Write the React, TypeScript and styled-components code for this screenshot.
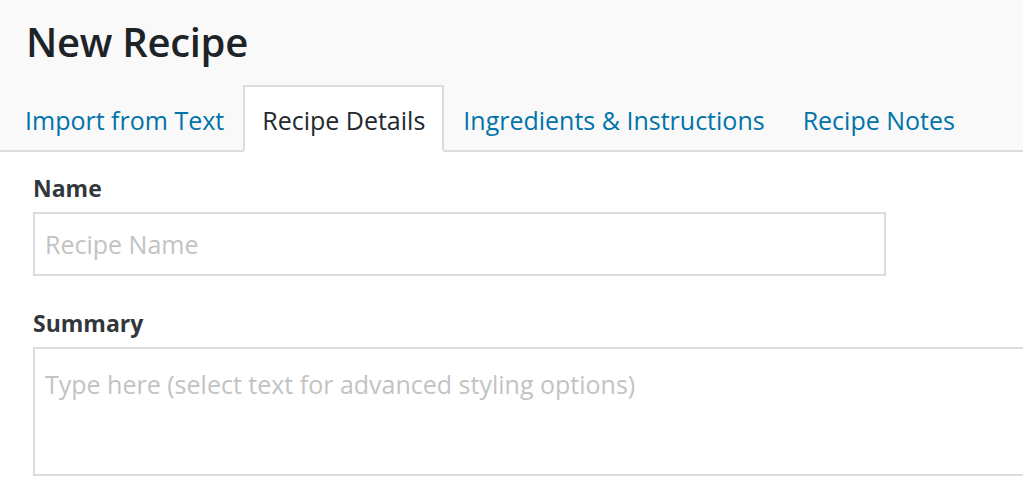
import React from 'react';
import styled, { createGlobalStyle } from 'styled-components';

const GlobalStyle = createGlobalStyle`
  body {
    margin: 0;
    background: #ffffff;
    font-family: 'Open Sans', 'Noto Sans', Arial, sans-serif;
    overflow: hidden;
  }
`;

const Header = styled.div`
  background: #f9f9f9;
  border-bottom: 2px solid #dcdcdc;
`;

const Title = styled.h1`
  margin: 0;
  padding: 17px 0 0 26px;
  font-size: 40px;
  font-weight: 600;
  line-height: 50px;
  color: #1d2327;
  letter-spacing: -0.3px;
`;

const TabList = styled.div`
  display: flex;
  margin: 18px 0 -2px 6px;
`;

const Tab = styled.div<{ $active?: boolean }>`
  box-sizing: border-box;
  height: 67px;
  padding: 2px 17px 0;
  display: flex;
  align-items: center;
  font-size: 25px;
  color: ${(p) => (p.$active ? '#23282d' : '#0073aa')};
  background: ${(p) => (p.$active ? '#ffffff' : 'transparent')};
  border: 2px solid ${(p) => (p.$active ? '#dcdcdc' : 'transparent')};
  border-bottom: 2px solid ${(p) => (p.$active ? '#ffffff' : 'transparent')};
`;

const Content = styled.div`
  padding: 22px 0 0 33px;
`;

const Field = styled.div`
  margin-bottom: 33px;
`;

const Label = styled.label`
  display: block;
  font-size: 23px;
  font-weight: 700;
  color: #32373c;
  line-height: 28px;
  margin-bottom: 10px;
`;

const Input = styled.input`
  box-sizing: border-box;
  width: 853px;
  height: 64px;
  border: 2px solid #dcdcdc;
  padding: 0 10px;
  font-family: inherit;
  font-size: 25px;
  color: #32373c;
  outline: none;
  &::placeholder {
    color: #c3c3c3;
  }
`;

const Editor = styled.div`
  box-sizing: border-box;
  width: 1010px;
  height: 129px;
  border: 2px solid #dcdcdc;
  padding: 18px 10px;
  font-size: 25px;
  color: #c3c3c3;
`;

export default function App() {
  return (
    <>
      <GlobalStyle />
      <Header>
        <Title>New Recipe</Title>
        <TabList>
          <Tab>Import from Text</Tab>
          <Tab $active>Recipe Details</Tab>
          <Tab>Ingredients &amp; Instructions</Tab>
          <Tab>Recipe Notes</Tab>
        </TabList>
      </Header>
      <Content>
        <Field>
          <Label>Name</Label>
          <Input placeholder="Recipe Name" />
        </Field>
        <Field>
          <Label>Summary</Label>
          <Editor>Type here (select text for advanced styling options)</Editor>
        </Field>
      </Content>
    </>
  );
}
